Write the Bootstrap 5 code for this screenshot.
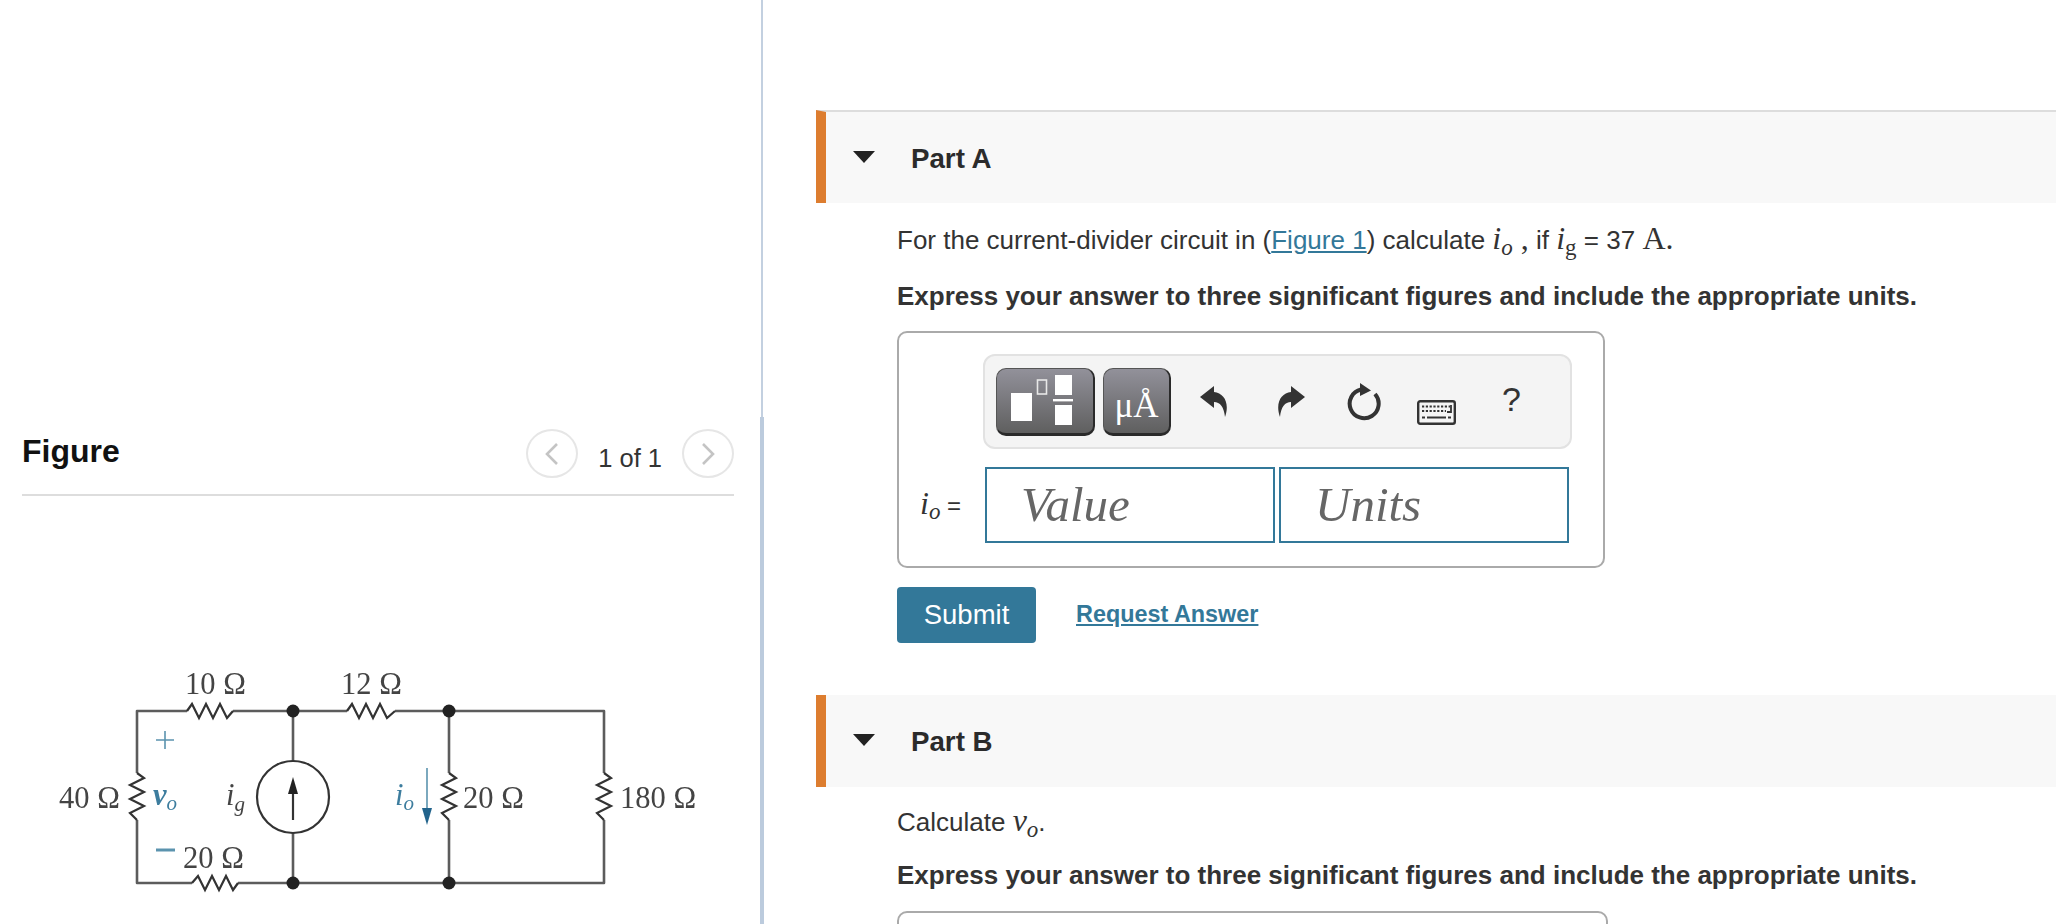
<!DOCTYPE html>
<html lang="en">
<head>
  <meta charset="UTF-8" />
  <title>Part A</title>
  <link href="https://cdn.jsdelivr.net/npm/bootstrap@5.3.0/dist/css/bootstrap.min.css" rel="stylesheet">
  <style>
    html, body { height: 924px; overflow: hidden; }
    body { font-family: "Liberation Sans", Arial, sans-serif; color: #333; background: #fff; font-size: 26px; }

    /* left pane */
    .figure-pane { width: 764px; height: 924px; flex: none; padding: 430px 30px 0 22px; position: relative; }
    .figure-pane::before { content: ""; position: absolute; top: 0; right: 1px; width: 2px; height: 417px; background: #c3d0e0; }
    .figure-pane::after { content: ""; position: absolute; top: 417px; right: 0; width: 4px; bottom: 0; background: #bccbdd; }
    .figure-head { height: 66px; border-bottom: 2px solid #ddd; padding-bottom: 17px; }
    .figure-title { font-size: 32px; font-weight: 700; color: #111; line-height: 38px; margin: -5px 0 0 0; }
    .pager-count { font-size: 25.5px; margin: 0 20px; line-height: 50px; position: relative; top: 4px; }
    .pager-btn { width: 52px; height: 49px; border: 2px solid #e6e6e6; border-radius: 50%; background: #fff; padding: 0; }
    .circuit { display: block; position: absolute; left: 0; top: 0; filter: blur(.7px); }

    /* right pane */
    .parts-pane { padding: 110px 0 0 52px; min-width: 0; }
    .part-head { height: 92px; background: #f8f8f8; border-left: 10px solid #dd7d2f; padding-left: 27px; }
    .part-head-a { height: 93px; border-top: 2px solid #ddd; }
    .part-arrow { width: 22px; height: 12px; flex: none; margin-top: -2px; }
    .part-name { font-size: 27.7px; font-weight: 700; color: #2b2b2b; margin: 2px 0 0 36px; line-height: 1; }
    .part-body { padding-left: 81px; }
    .question { margin: 0; line-height: 36px; height: 36px; }
    .question-a { margin-top: 19px; }
    .instruction { font-weight: 700; margin: 20px 0 0; line-height: 36px; }
    .instruction-b { margin-top: 17px; }
    .math-i { font-family: "Liberation Serif", serif; font-style: italic; font-size: 32px; line-height: 1; }
    .math-r { font-family: "Liberation Serif", serif; font-size: 32px; line-height: 1; }
    .math-i sub, .math-r sub { font-size: 23px; bottom: -.25em; line-height: 0; }
    .text-link { color: #337899; }

    .answer-box { width: 708px; height: 237px; margin-top: 17px; border: 2px solid #aaa; border-radius: 10px; padding: 21px 0 0 84px; }
    .toolbar-box { height: 95px; width: 589px; background: #f4f4f4; border: 2px solid #e2e2e2; border-radius: 12px; padding-left: 11px; }
    .tool-btn { height: 68px; background: linear-gradient(#92919a, #5f5f5f); border: 1px solid #555; border-bottom: 3px solid #2a2a2a; border-right: 2px solid #2a2a2a; border-radius: 10px; padding: 0; flex: none; }
    .tool-btn-wide { width: 99px; margin-right: 8px; }
    .tool-btn-unit { width: 68px; color: #fff; font-family: "Liberation Serif", serif; font-size: 35px; line-height: 1; padding-top: 9px; }
    .tool-icon { flex: none; display: block; }
    .tool-undo { margin-left: 29px; }
    .tool-redo { margin-left: 49px; }
    .tool-reset { margin-left: 39px; }
    .tool-keys { margin-left: 35px; margin-top: 22px; }
    .tool-help { font-size: 34px; color: #333; line-height: 1; margin: -6px 0 0 46px; }
    .answer-label { width: 65px; margin-left: -63px; flex: none; font-size: 24px; }
    .answer-row { margin-top: 18px; }
    .answer-field { width: 290px; height: 76px; border: 2px solid #337899; font-family: "Liberation Serif", serif; font-style: italic; font-size: 49px; color: #666; padding-left: 34px; flex: none; }
    .answer-field + .answer-field { margin-left: 4px; }
    .submit-row { margin-top: 19px; }
    .submit-btn { background: #337899; color: #fff; border: 0; border-radius: 4px; width: 139px; height: 56px; font-size: 27.5px; padding: 0; }
    .submit-btn:hover { background: #337899; color: #fff; }
    .request-link { font-weight: 700; color: #337899; margin-left: 40px; font-size: 23.4px; }

    .part-b { margin-top: 52px; }
    .question-b { margin-top: 17px; }
    .answer-box-b { width: 711px; margin-top: 18px; }
  </style>
</head>
<body>
  <div class="d-flex">
    <div class="figure-pane">
      <div class="figure-head d-flex justify-content-between align-items-center">
        <h2 class="figure-title">Figure</h2>
        <div class="d-flex align-items-center">
          <button type="button" class="pager-btn d-flex align-items-center justify-content-center" aria-label="Previous">
            <svg width="14" height="22" viewBox="0 0 14 22"><path d="M12 1 L2 11 L12 21" fill="none" stroke="#c4c4c4" stroke-width="2.6"/></svg>
          </button>
          <span class="pager-count">1 of 1</span>
          <button type="button" class="pager-btn d-flex align-items-center justify-content-center" aria-label="Next">
            <svg width="14" height="22" viewBox="0 0 14 22"><path d="M2 1 L12 11 L2 21" fill="none" stroke="#c4c4c4" stroke-width="2.6"/></svg>
          </button>
        </div>
      </div>

      <!-- circuit drawing, coordinates are the page's own -->
      <svg class="circuit" width="760" height="924" viewBox="0 0 760 924" font-family="'Liberation Serif', serif" font-size="30.5" fill="#444">
        <g fill="none" stroke="#5c5c5c" stroke-width="2.6" stroke-linejoin="round">
          <path d="M187 711 H137 V773 M137 820 V883 H192 M233 711 H347 M395 711 H604 V773 M604 820 V883 H238 M293 711 V761 M293 833 V883 M449 711 V773 M449 820 V883"/>
        </g>
        <g fill="none" stroke="#333" stroke-width="2.2" stroke-linejoin="miter">
          <path d="M187 711 L192 704 L199 718 L206 704 L213 718 L220 704 L227 718 L233 711"/>
          <path d="M347 711 L352 704 L359 718 L366 704 L373 718 L380 704 L387 718 L395 711"/>
          <path d="M192 883 L198 876 L205 890 L212 876 L219 890 L226 876 L233 890 L238 883"/>
          <path d="M137 773 L144 778 L130 785 L144 792 L130 799 L144 806 L130 813 L137 820"/>
          <path d="M449 773 L456 778 L442 785 L456 792 L442 799 L456 806 L442 813 L449 820"/>
          <path d="M604 773 L611 778 L597 785 L611 792 L597 799 L611 806 L597 813 L604 820"/>
          <circle cx="293" cy="797" r="36"/>
          <path d="M293 820 V788"/>
        </g>
        <path d="M293 777 L298 794 H288 Z" fill="#222"/>
        <g fill="#222">
          <circle cx="293" cy="711" r="6.5"/>
          <circle cx="449" cy="711" r="6.5"/>
          <circle cx="293" cy="883" r="6.5"/>
          <circle cx="449" cy="883" r="6.5"/>
        </g>
        <path d="M165 731 V749 M156 740 H174" stroke="#5b93ae" stroke-width="1.6" fill="none"/>
        <path d="M156 850 H175" stroke="#5b93ae" stroke-width="3" fill="none"/>
        <path d="M427 768 V810" stroke="#5b93ae" stroke-width="1.6" fill="none"/>
        <path d="M422 808 H432 L427 825 Z" fill="#22648c"/>
        <text x="185" y="694">10 Ω</text>
        <text x="341" y="694">12 Ω</text>
        <text x="59" y="808">40 Ω</text>
        <text x="183" y="868">20 Ω</text>
        <text x="463" y="808">20 Ω</text>
        <text x="620" y="808">180 Ω</text>
        <text x="153" y="805" font-style="italic" font-weight="700" fill="#3d7d9e">v<tspan dy="5" font-size="21" font-weight="400">o</tspan></text>
        <text x="226" y="805" font-style="italic">i<tspan dy="6" font-size="21">g</tspan></text>
        <text x="395" y="805" font-style="italic" fill="#3d7d9e">i<tspan dy="5" font-size="21">o</tspan></text>
      </svg>
    </div>

    <div class="parts-pane flex-grow-1">
      <div class="part-head part-head-a d-flex align-items-center">
        <svg class="part-arrow" viewBox="0 0 22 12"><path d="M0 0 H22 L11 12 Z" fill="#222"/></svg>
        <h3 class="part-name">Part A</h3>
      </div>
      <div class="part-body">
        <p class="question question-a">For the current-divider circuit in (<a href="#" class="text-link">Figure 1</a>) calculate <span class="math-i">i<sub>o</sub></span><span class="math-r"> ,</span> if <span class="math-i">i</span><span class="math-r"><sub>g</sub></span> = 37 <span class="math-r">A.</span></p>
        <p class="instruction">Express your answer to three significant figures and include the appropriate units.</p>

        <div class="answer-box">
          <div class="toolbar-box d-flex align-items-center">
            <button type="button" class="tool-btn tool-btn-wide d-flex align-items-center justify-content-center" aria-label="Templates">
              <svg width="99" height="68" viewBox="0 0 99 68" class="tool-icon">
                <rect x="15" y="26" width="21" height="28" fill="#fff"/>
                <rect x="41.5" y="13" width="9" height="14" fill="none" stroke="#e8e8e8" stroke-width="1.6"/>
                <rect x="59" y="8" width="17" height="20" fill="#fff"/>
                <rect x="57" y="32" width="20" height="2.4" fill="#fff"/>
                <rect x="59" y="38" width="17" height="20" fill="#fff"/>
              </svg>
            </button>
            <button type="button" class="tool-btn tool-btn-unit">μÅ</button>
            <svg class="tool-icon tool-undo" width="28" height="31" viewBox="0 0 28 31"><path d="M0 11 L14 0 V6 C24 7 30 17 25 31 C24 21 20 16 14 16 V22 Z" fill="#333"/></svg>
            <svg class="tool-icon tool-redo" width="28" height="31" viewBox="0 0 28 31"><path d="M28 11 L14 0 V6 C4 7 -2 17 3 31 C4 21 8 16 14 16 V22 Z" fill="#333"/></svg>
            <svg class="tool-icon tool-reset" width="38" height="38" viewBox="0 0 38 38"><path d="M17 6.5 A14.5 14.5 0 1 0 31 11" fill="none" stroke="#333" stroke-width="4"/><path d="M16 0 L27 7.5 L16 13 Z" fill="#333"/></svg>
            <svg class="tool-icon tool-keys" width="39" height="25" viewBox="0 0 39 25">
              <rect x="1.2" y="1.2" width="36.6" height="22.6" rx="2" fill="#f4f4f4" stroke="#333" stroke-width="2.4"/>
              <path d="M5 6.5 H33 M5 11 H29" stroke="#333" stroke-width="2" stroke-dasharray="2.2 1.6" fill="none"/>
              <path d="M34 5 V12 H30" stroke="#333" stroke-width="1.8" fill="none"/>
              <path d="M5 17.5 H8 M10 17.5 H29 M31 17.5 H34" stroke="#333" stroke-width="2.2" fill="none"/>
            </svg>
            <span class="tool-help">?</span>
          </div>
          <div class="answer-row d-flex align-items-center">
            <div class="answer-label"><span class="math-i">i<sub>o</sub></span> =</div>
            <div class="answer-field d-flex align-items-center">Value</div>
            <div class="answer-field d-flex align-items-center">Units</div>
          </div>
        </div>

        <div class="submit-row d-flex align-items-center">
          <button type="button" class="btn submit-btn">Submit</button>
          <a href="#" class="request-link">Request Answer</a>
        </div>
      </div>

      <div class="part-head part-b d-flex align-items-center">
        <svg class="part-arrow" viewBox="0 0 22 12"><path d="M0 0 H22 L11 12 Z" fill="#222"/></svg>
        <h3 class="part-name">Part B</h3>
      </div>
      <div class="part-body">
        <p class="question question-b">Calculate <span class="math-i">v<sub>o</sub></span>.</p>
        <p class="instruction instruction-b">Express your answer to three significant figures and include the appropriate units.</p>
        <div class="answer-box answer-box-b"></div>
      </div>
    </div>
  </div>
  <script src="https://cdn.jsdelivr.net/npm/bootstrap@5.3.0/dist/js/bootstrap.bundle.min.js"></script>
</body>
</html>
